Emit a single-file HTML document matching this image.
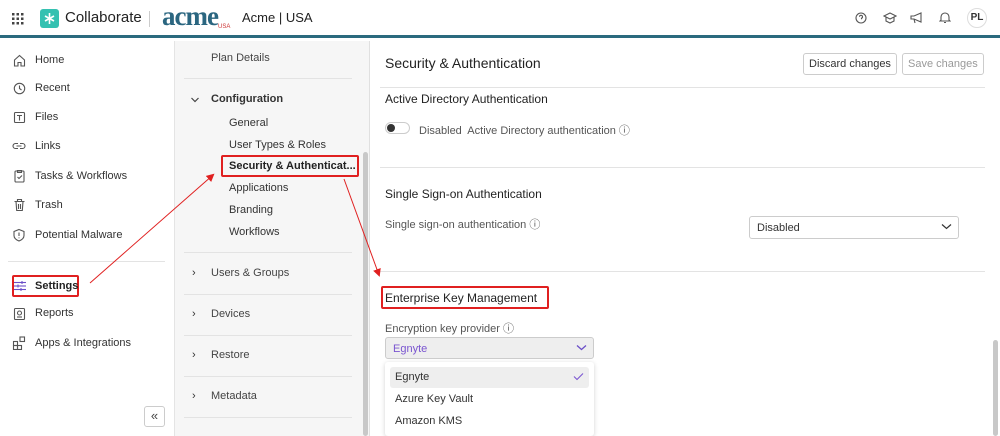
<!DOCTYPE html>
<html><head><style>
*{box-sizing:border-box;margin:0;padding:0}
body{width:1000px;height:436px;overflow:hidden;font-family:"Liberation Sans",sans-serif;background:#fff;color:#333;position:relative;font-size:11px}
.a{position:absolute;white-space:nowrap}
.top{left:0;top:0;width:1000px;height:38px;background:#fff;border-bottom:3px solid #2a6a7e}
.side{left:0;top:41px;width:175px;height:395px;background:#fff;border-right:1px solid #e4e4e4}
.mid{left:175px;top:41px;width:195px;height:395px;background:#f6f6f6;border-right:1px solid #e0e0e0}
.hr{height:1px;background:#e3e3e3}
.nav{font-size:11px;color:#333}
.red{border:2px solid #e02020;border-radius:2px}
.btn{border:1px solid #ccc;border-radius:3px;font-size:11px;padding:0 5px;height:22px;line-height:20px;background:#fff}
svg.i{position:absolute;fill:none;stroke:#555;stroke-width:1.1}
</style></head><body>
<div class="a top"></div>
<svg class="a" style="left:12px;top:13px" width="12" height="12"><g fill="#444"><rect x="0" y="0" width="2.5" height="2.5"/><rect x="4.5" y="0" width="2.5" height="2.5"/><rect x="9" y="0" width="2.5" height="2.5"/><rect x="0" y="4.5" width="2.5" height="2.5"/><rect x="4.5" y="4.5" width="2.5" height="2.5"/><rect x="9" y="4.5" width="2.5" height="2.5"/><rect x="0" y="9" width="2.5" height="2.5"/><rect x="4.5" y="9" width="2.5" height="2.5"/><rect x="9" y="9" width="2.5" height="2.5"/></g></svg>
<div class="a" style="left:40px;top:9px;width:19px;height:19px;background:#35c1b1;border-radius:3px"></div>
<svg class="a" style="left:40px;top:9px" width="19" height="19"><g stroke="#fff" stroke-width="1.6"><line x1="9.5" y1="4" x2="9.5" y2="15"/><line x1="5" y1="7" x2="14" y2="12"/><line x1="5" y1="12" x2="14" y2="7"/></g></svg>
<div class="a" style="left:65px;top:9px;font-size:15px;color:#222">Collaborate</div>
<div class="a" style="left:149px;top:11px;width:1px;height:16px;background:#ccc"></div>
<div class="a" style="left:162px;top:1px;font-family:'Liberation Serif',serif;font-weight:bold;font-size:27px;color:#2b6680;letter-spacing:-1px">acme</div>
<div class="a" style="left:218px;top:24px;font-size:6px;color:#c33">USA</div>
<div class="a" style="left:242px;top:10px;font-size:13px;color:#222">Acme | USA</div>
<svg class="i" style="left:855px;top:12px" width="12" height="12"><circle cx="6" cy="6" r="5"/><path d="M4.5 4.8a1.5 1.5 0 1 1 2 1.4v1"/></svg>
<svg class="i" style="left:883px;top:11px" width="14" height="13"><path d="M1 5l6-3 6 3-6 3z M3 6v4l4 2 4-2V6"/></svg>
<svg class="i" style="left:910px;top:11px" width="14" height="13"><path d="M1 5h3l7-3v9l-7-3H1z M4 8l1 4"/></svg>
<svg class="i" style="left:939px;top:11px" width="12" height="13"><path d="M2 9V6a4 4 0 0 1 8 0v3l1 1H1z M5 11.5h2"/></svg>
<div class="a" style="left:967px;top:8px;width:20px;height:20px;border:1px solid #ddd;border-radius:50%;font-size:10px;font-weight:bold;line-height:18px;text-align:center;color:#333">PL</div>

<div class="a side"></div>
<svg class="i" style="left:13px;top:54px" width="13" height="13"><path d="M1.5 6L6.5 1.5 11.5 6V12H8V8.5H5V12H1.5z"/></svg><div class="a nav" style="left:35px;top:54px">Home</div>
<svg class="i" style="left:13px;top:82px" width="13" height="13"><circle cx="6.5" cy="6.5" r="5.2"/><path d="M6.5 3.5v3l2 1.5"/></svg><div class="a nav" style="left:35px;top:82px">Recent</div>
<svg class="i" style="left:13px;top:111px" width="13" height="13"><rect x="1.5" y="1.5" width="10" height="10" rx="1"/><path d="M4 4.5h5M6.5 4.5v5"/></svg><div class="a nav" style="left:35px;top:111px">Files</div>
<svg class="i" style="left:12px;top:141px" width="14" height="10"><path d="M6 2.5H3.5a2.5 2.5 0 0 0 0 5H6M8 2.5h2.5a2.5 2.5 0 0 1 0 5H8M4.5 5h5"/></svg><div class="a nav" style="left:35px;top:140px">Links</div>
<svg class="i" style="left:13px;top:169px" width="13" height="14"><rect x="2" y="2" width="9" height="11" rx="1"/><path d="M4.5 1.5h4v2h-4z M4.5 8l1.5 1.5 3-3"/></svg><div class="a nav" style="left:35px;top:170px">Tasks &amp; Workflows</div>
<svg class="i" style="left:13px;top:198px" width="13" height="14"><path d="M1.5 3.5h10M4.5 3.5V1.5h4v2M3 3.5l.7 9h5.6l.7-9M5.5 6v5M7.5 6v5"/></svg><div class="a nav" style="left:35px;top:199px">Trash</div>
<svg class="i" style="left:12px;top:228px" width="14" height="14"><path d="M7 1.5l5 2v4c0 3-2.5 4.5-5 5.5-2.5-1-5-2.5-5-5.5v-4z M7 4.5v3.5M7 9.5v.8"/></svg><div class="a nav" style="left:35px;top:229px">Potential Malware</div>
<div class="a hr" style="left:8px;top:261px;width:157px"></div>
<div class="a red" style="left:12px;top:275px;width:67px;height:22px"></div>
<svg class="a" style="left:14px;top:280px" width="12" height="12"><g stroke="#6b4fc8" stroke-width="1.1"><line x1="0" y1="2.5" x2="12" y2="2.5"/><line x1="0" y1="6" x2="12" y2="6"/><line x1="0" y1="9.5" x2="12" y2="9.5"/><line x1="8" y1="1" x2="8" y2="4"/><line x1="4" y1="4.5" x2="4" y2="7.5"/><line x1="7" y1="8" x2="7" y2="11"/></g></svg>
<div class="a nav" style="left:35px;top:280px;font-weight:bold;color:#222">Settings</div>
<svg class="i" style="left:13px;top:307px" width="13" height="14"><rect x="1.5" y="1.5" width="10" height="11" rx="1"/><circle cx="6.5" cy="6" r="2"/><path d="M4 10h5"/></svg><div class="a nav" style="left:35px;top:307px">Reports</div>
<svg class="i" style="left:12px;top:336px" width="14" height="14"><rect x="1.5" y="5.5" width="4" height="4"/><rect x="1.5" y="9.5" width="4" height="4"/><rect x="5.5" y="9.5" width="4" height="4"/><rect x="8" y="1" width="4.5" height="4.5"/></svg><div class="a nav" style="left:35px;top:337px">Apps &amp; Integrations</div>
<div class="a" style="left:144px;top:406px;width:21px;height:21px;border:1px solid #ccc;border-radius:3px;text-align:center;line-height:18px;font-size:13px;color:#444">«</div>

<div class="a mid"></div>
<div class="a nav" style="left:211px;top:52px;color:#444">Plan Details</div>
<div class="a hr" style="left:184px;top:78px;width:168px"></div>
<svg class="i" style="left:190px;top:96px" width="10" height="8"><path d="M1.5 2l3.5 3.5 3.5-3.5" stroke="#444" stroke-width="1.2"/></svg>
<div class="a nav" style="left:211px;top:93px;font-weight:bold">Configuration</div>
<div class="a nav" style="left:229px;top:117px">General</div>
<div class="a nav" style="left:229px;top:139px">User Types &amp; Roles</div>
<div class="a red" style="left:221px;top:155px;width:138px;height:22px"></div>
<div class="a nav" style="left:229px;top:160px;font-weight:bold;color:#222">Security &amp; Authenticat...</div>
<div class="a nav" style="left:229px;top:182px">Applications</div>
<div class="a nav" style="left:229px;top:204px">Branding</div>
<div class="a nav" style="left:229px;top:226px">Workflows</div>
<div class="a hr" style="left:184px;top:252px;width:168px"></div>
<div class="a nav" style="left:192px;top:267px">›</div><div class="a nav" style="left:211px;top:267px;color:#444">Users &amp; Groups</div>
<div class="a hr" style="left:184px;top:294px;width:168px"></div>
<div class="a nav" style="left:192px;top:308px">›</div><div class="a nav" style="left:211px;top:308px;color:#444">Devices</div>
<div class="a hr" style="left:184px;top:335px;width:168px"></div>
<div class="a nav" style="left:192px;top:349px">›</div><div class="a nav" style="left:211px;top:349px;color:#444">Restore</div>
<div class="a hr" style="left:184px;top:376px;width:168px"></div>
<div class="a nav" style="left:192px;top:390px">›</div><div class="a nav" style="left:211px;top:390px;color:#444">Metadata</div>
<div class="a hr" style="left:184px;top:417px;width:168px"></div>
<div class="a" style="left:363px;top:152px;width:5px;height:284px;background:#c8c8c8;border-radius:3px"></div>

<div class="a" style="left:385px;top:55px;font-size:14px;color:#222">Security &amp; Authentication</div>
<div class="a btn" style="left:803px;top:53px">Discard changes</div>
<div class="a btn" style="left:902px;top:53px;color:#999">Save changes</div>
<div class="a hr" style="left:380px;top:87px;width:605px"></div>
<div class="a" style="left:385px;top:92px;font-size:12px;color:#222">Active Directory Authentication</div>
<div class="a" style="left:385px;top:122px;width:25px;height:12px;border:1px solid #ccc;border-radius:6px"></div>
<div class="a" style="left:387px;top:124px;width:8px;height:8px;background:#333;border-radius:50%"></div>
<div class="a" style="left:419px;top:122px;color:#555">Disabled&nbsp; Active Directory authentication ⓘ</div>
<div class="a hr" style="left:380px;top:167px;width:605px"></div>
<div class="a" style="left:385px;top:187px;font-size:12px;color:#222">Single Sign-on Authentication</div>
<div class="a" style="left:385px;top:216px;color:#555">Single sign-on authentication ⓘ</div>
<div class="a" style="left:749px;top:216px;width:210px;height:23px;border:1px solid #ccc;border-radius:3px;padding:5px 7px;color:#333">Disabled</div>
<svg class="i" style="left:941px;top:223px" width="11" height="8"><path d="M1 1.5l4.5 4 4.5-4" stroke="#333" stroke-width="1.2"/></svg>
<div class="a hr" style="left:380px;top:271px;width:605px"></div>
<div class="a red" style="left:381px;top:286px;width:168px;height:23px"></div>
<div class="a" style="left:385px;top:291px;font-size:12px;color:#222">Enterprise Key Management</div>
<div class="a" style="left:385px;top:320px;color:#555">Encryption key provider ⓘ</div>
<div class="a" style="left:385px;top:337px;width:209px;height:22px;border:1px solid #ccc;border-radius:3px;background:#eee;padding:5px 7px;color:#7a55d0">Egnyte</div>
<svg class="i" style="left:576px;top:344px" width="11" height="8"><path d="M1 1.5l4.5 4 4.5-4" stroke="#6b4fc8" stroke-width="1.3"/></svg>
<div class="a" style="left:385px;top:362px;width:209px;height:74px;background:#fff;box-shadow:0 1px 5px rgba(0,0,0,.18);border-radius:3px"></div>
<div class="a" style="left:390px;top:367px;width:199px;height:21px;background:#eee;border-radius:3px"></div>
<div class="a" style="left:395px;top:371px;color:#333">Egnyte</div>
<svg class="i" style="left:573px;top:372px" width="11" height="9"><path d="M1 4.5l3 3 6-6" stroke="#7a55d0" stroke-width="1.1"/></svg>
<div class="a" style="left:395px;top:393px;color:#333">Azure Key Vault</div>
<div class="a" style="left:395px;top:415px;color:#333">Amazon KMS</div>
<div class="a" style="left:993px;top:340px;width:5px;height:96px;background:#c8c8c8;border-radius:3px"></div>

<svg class="a" style="left:0;top:0" width="1000" height="436">
<defs><marker id="m" markerWidth="8" markerHeight="8" refX="6" refY="4" orient="auto"><path d="M0,0 L8,4 L0,8 z" fill="#e02020"/></marker></defs>
<line x1="90" y1="283" x2="213" y2="175" stroke="#e02020" stroke-width="1" marker-end="url(#m)"/>
<line x1="344" y1="179" x2="379" y2="275" stroke="#e02020" stroke-width="1" marker-end="url(#m)"/>
</svg>
</body></html>
